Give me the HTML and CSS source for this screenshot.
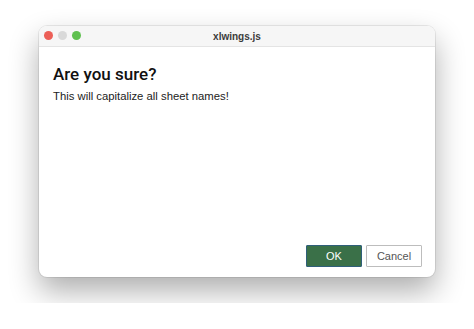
FILE: index.html
```html
<!DOCTYPE html>
<html lang="en">
<head>
  <meta charset="UTF-8">
  <title>xlwings.js</title>
  <link rel="stylesheet" href="styles.css">
</head>
<body>

  <div class="window">
    <div class="titlebar">
      <div class="lights">
        <span class="light red"></span>
        <span class="light gray"></span>
        <span class="light green"></span>
      </div>
      <div class="title">xlwings.js</div>
    </div>
    <div class="content">
      <h2>Are you sure?</h2>
      <p>This will capitalize all sheet names!</p>
      <div class="actions">
        <button class="btn ok">OK</button>
        <button class="btn cancel">Cancel</button>
      </div>
    </div>
  </div>

</body>
</html>
```
FILE: styles.css
```css
body {
  margin: 0;
  padding: 26px 39px;
  background: #fff;
  font-family: "Liberation Sans", Arial, sans-serif;
}
.window {
  width: 396px;
  height: 251px;
  background: #fff;
  border-radius: 8px;
  box-shadow: 0 14px 30px rgba(0, 0, 0, 0.32), 0 0 0 1px rgba(0, 0, 0, 0.08);
  display: flex;
  flex-direction: column;
  overflow: hidden;
}
.titlebar {
  position: relative;
  height: 20px;
  background: #f6f6f6;
  border-bottom: 1px solid #e4e4e4;
  display: flex;
  align-items: center;
  justify-content: center;
}
.lights {
  position: absolute;
  left: 5px;
  top: 5px;
  display: flex;
  gap: 5px;
}
.light {
  width: 9px;
  height: 9px;
  border-radius: 50%;
}
.red { background: #ec5f57; }
.gray { background: #d9d9d9; }
.green { background: #5fc04f; }
.title {
  font-size: 10px;
  font-weight: bold;
  color: #3c3c3c;
}
.content {
  flex: 1;
  padding: 17px 13px 10px 14px;
  display: flex;
  flex-direction: column;
}
h2 {
  margin: 0;
  font-family: Roboto, "Liberation Sans", sans-serif;
  font-size: 17px;
  font-weight: 500;
  color: #111;
}
p {
  margin: 6px 0 0;
  font-size: 11.3px;
  color: #222;
}
.actions {
  margin-top: auto;
  display: flex;
  justify-content: flex-end;
  gap: 4px;
}
.btn {
  width: 56px;
  height: 22px;
  font-family: "Liberation Sans", Arial, sans-serif;
  font-size: 11px;
  border-radius: 1px;
  cursor: pointer;
}
.ok {
  background: #3a7048;
  color: #fff;
  border: 1px solid #2f5f7a;
}
.cancel {
  background: #fff;
  color: #555;
  border: 1px solid #bdbdbd;
}
```
